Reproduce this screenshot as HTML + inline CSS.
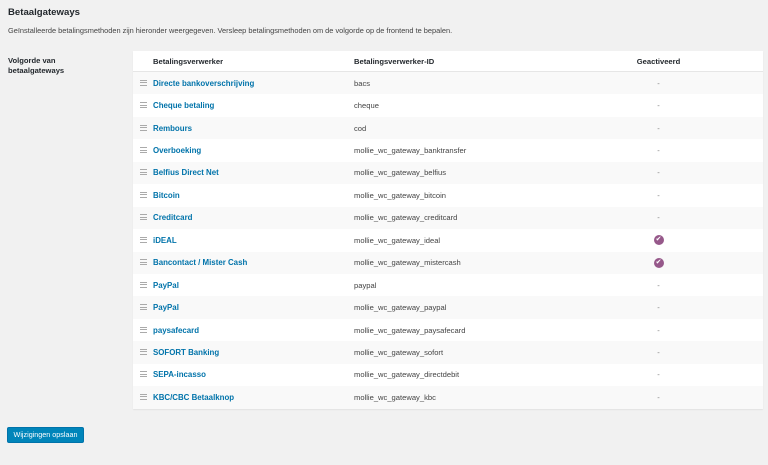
<!DOCTYPE html>
<html><head><style>
body{margin:0;width:768px;height:465px;background:#f1f1f1;font-family:"Liberation Sans",sans-serif;color:#23282d;position:relative;overflow:hidden}
h2{position:absolute;left:8px;top:7px;margin:0;font-size:9.6px;font-weight:bold}
.desc{position:absolute;left:8px;top:26px;font-size:7.4px;color:#444}
.lbl{position:absolute;left:8px;top:56px;font-size:7.6px;font-weight:bold;line-height:10px}
table{position:absolute;left:133px;top:51px;width:630px;border-collapse:collapse;background:#fff;font-size:7.6px;box-shadow:0 1px 1px rgba(0,0,0,.06)}
th{height:20px;text-align:left;font-weight:bold;color:#23282d;border-bottom:1px solid #e6e6e6;padding:0}
td{height:22.45px;padding:0;color:#444}
tr:nth-child(odd) td{background:#f9f9f9}
.h{width:20px;text-align:center}
.h span{display:inline-block;width:7px;height:4px;border-top:1px solid #aaa;border-bottom:1px solid #aaa;position:relative;top:0px}
.h span:after{content:"";position:absolute;left:0;right:0;top:1.5px;border-top:1px solid #aaa}
.n{width:201px;font-weight:bold;color:#0073aa;font-size:7.9px}
.i{width:200px}
.a{text-align:center;color:#777}
.ck{display:inline-block;width:10px;height:10px;border-radius:50%;background:#96588a;color:#fff;font-size:7px;line-height:10px;vertical-align:middle}
.btn{position:absolute;left:7px;top:427px;width:77px;height:16px;background:#0085ba;border:1px solid #0073aa;box-sizing:border-box;border-radius:2px;color:#fff;font-size:7.2px;text-align:center;line-height:14px}
</style></head><body>
<h2>Betaalgateways</h2>
<div class="desc">Geïnstalleerde betalingsmethoden zijn hieronder weergegeven. Versleep betalingsmethoden om de volgorde op de frontend te bepalen.</div>
<div class="lbl">Volgorde van<br>betaalgateways</div>
<table>
<thead><tr><th></th><th>Betalingsverwerker</th><th>Betalingsverwerker-ID</th><th style="text-align:center">Geactiveerd</th></tr></thead>
<tbody>
<tr><td class="h"><span></span></td><td class="n">Directe bankoverschrijving</td><td class="i">bacs</td><td class="a">-</td></tr>
<tr><td class="h"><span></span></td><td class="n">Cheque betaling</td><td class="i">cheque</td><td class="a">-</td></tr>
<tr><td class="h"><span></span></td><td class="n">Rembours</td><td class="i">cod</td><td class="a">-</td></tr>
<tr><td class="h"><span></span></td><td class="n">Overboeking</td><td class="i">mollie_wc_gateway_banktransfer</td><td class="a">-</td></tr>
<tr><td class="h"><span></span></td><td class="n">Belfius Direct Net</td><td class="i">mollie_wc_gateway_belfius</td><td class="a">-</td></tr>
<tr><td class="h"><span></span></td><td class="n">Bitcoin</td><td class="i">mollie_wc_gateway_bitcoin</td><td class="a">-</td></tr>
<tr><td class="h"><span></span></td><td class="n">Creditcard</td><td class="i">mollie_wc_gateway_creditcard</td><td class="a">-</td></tr>
<tr><td class="h"><span></span></td><td class="n">iDEAL</td><td class="i">mollie_wc_gateway_ideal</td><td class="a"><span class="ck">✔</span></td></tr>
<tr><td class="h"><span></span></td><td class="n">Bancontact / Mister Cash</td><td class="i">mollie_wc_gateway_mistercash</td><td class="a"><span class="ck">✔</span></td></tr>
<tr><td class="h"><span></span></td><td class="n">PayPal</td><td class="i">paypal</td><td class="a">-</td></tr>
<tr><td class="h"><span></span></td><td class="n">PayPal</td><td class="i">mollie_wc_gateway_paypal</td><td class="a">-</td></tr>
<tr><td class="h"><span></span></td><td class="n">paysafecard</td><td class="i">mollie_wc_gateway_paysafecard</td><td class="a">-</td></tr>
<tr><td class="h"><span></span></td><td class="n">SOFORT Banking</td><td class="i">mollie_wc_gateway_sofort</td><td class="a">-</td></tr>
<tr><td class="h"><span></span></td><td class="n">SEPA-incasso</td><td class="i">mollie_wc_gateway_directdebit</td><td class="a">-</td></tr>
<tr><td class="h"><span></span></td><td class="n">KBC/CBC Betaalknop</td><td class="i">mollie_wc_gateway_kbc</td><td class="a">-</td></tr>
</tbody></table>
<div class="btn">Wijzigingen opslaan</div>
</body></html>
